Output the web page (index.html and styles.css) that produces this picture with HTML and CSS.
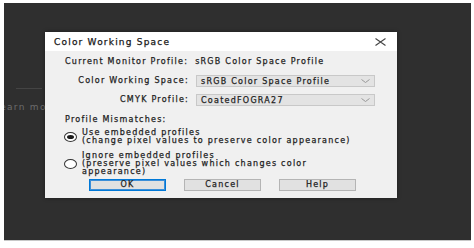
FILE: index.html
```html
<!DOCTYPE html>
<html lang="en">
<head>
    <meta charset="UTF-8">
    <title>Color Working Space</title>
    <link rel="stylesheet" href="styles.css">
</head>
<body>

<div class="screen">
    <div class="backdrop">
        <span class="rule"></span>
        <span class="learn">Learn more</span>
    </div>

    <div class="dialog">
        <div class="title-bar">
            <span>Color Working Space</span>
            <svg class="close" width="11" height="8" viewBox="0 0 11 8">
                <path d="M0.5 0.5 L10.5 7.5 M10.5 0.5 L0.5 7.5" stroke="#444" stroke-width="1.1" fill="none"/>
            </svg>
        </div>

        <div class="content">
            <div class="monitor-row">
                <span>Current Monitor Profile:</span>
                <span class="monitor-value">sRGB Color Space Profile</span>
            </div>

            <div class="field-grid">
                <label>Color Working Space:</label>
                <div class="select">
                    <span>sRGB Color Space Profile</span>
                    <svg width="9" height="4" viewBox="0 0 9 4"><path d="M0.5 0.5 L4.5 3.5 L8.5 0.5" stroke="#999" fill="none"/></svg>
                </div>
                <label>CMYK Profile:</label>
                <div class="select">
                    <span>CoatedFOGRA27</span>
                    <svg width="9" height="4" viewBox="0 0 9 4"><path d="M0.5 0.5 L4.5 3.5 L8.5 0.5" stroke="#999" fill="none"/></svg>
                </div>
            </div>

            <p class="section-label">Profile Mismatches:</p>

            <div class="radio-option">
                <span class="radio checked"></span>
                <span class="radio-text">Use embedded profiles<br>(change pixel values to preserve color appearance)</span>
            </div>
            <div class="radio-option">
                <span class="radio"></span>
                <span class="radio-text">Ignore embedded profiles<br>(preserve pixel values which changes color<br>appearance)</span>
            </div>

            <div class="buttons">
                <button class="btn default">OK</button>
                <button class="btn">Cancel</button>
                <button class="btn">Help</button>
            </div>
        </div>
    </div>
</div>

</body>
</html>
```

FILE: styles.css
```css
body {
    font-family: "DejaVu Sans", Verdana, sans-serif;
    margin: 0;
    padding: 0;
    background: white;
}
.screen {
    position: relative;
    margin: 3px 3px 0 4px;
    height: 238px;
    background: #2f2f2f;
    border-bottom: 1px solid #c8c8c8;
    padding: 29px 0 0 41px;
    box-sizing: border-box;
    overflow: hidden;
}
.backdrop {
    position: absolute;
    left: 0;
    top: 85px;
}
.backdrop .rule {
    display: block;
    margin-left: 12px;
    width: 26px;
    border-top: 1px solid #444;
}
.backdrop .learn {
    display: block;
    margin: 13px 0 0 -10px;
    font-size: 9px;
    letter-spacing: 1.3px;
    color: #6c6c6c;
    white-space: nowrap;
}
.dialog {
    position: relative;
    width: 352px;
    height: 166px;
    background: #f0f0f0;
    box-shadow: 0 0 4px rgba(0,0,0,0.4);
    font-size: 8px;
    letter-spacing: 1.25px;
    color: #1e1e1e;
    -webkit-text-stroke: 0.25px #1e1e1e;
}
.title-bar {
    height: 19px;
    background: white;
    display: flex;
    justify-content: space-between;
    align-items: center;
    padding: 0 11px 0 9px;
    font-size: 9px;
    letter-spacing: 1.2px;
    color: #111;
}
.content {
    padding: 7px 0 0 20px;
}
.monitor-row {
    display: flex;
    height: 8px;
    line-height: 8px;
}
.monitor-value {
    margin-left: 7px;
}
.field-grid {
    display: grid;
    grid-template-columns: 124px 179px;
    column-gap: 7px;
    row-gap: 7px;
    margin-top: 9px;
}
.field-grid label {
    text-align: right;
    line-height: 12px;
}
.select {
    height: 12px;
    background: #e3e3e3;
    border: 1px solid #c8c8c8;
    box-sizing: border-box;
    display: flex;
    justify-content: space-between;
    align-items: center;
    padding: 0 4px 0 4px;
}
.section-label {
    margin: 10px 0 0 0;
    line-height: 8px;
}
.radio-option {
    display: flex;
    align-items: center;
    margin-top: 5px;
}
.radio-option + .radio-option {
    margin-top: 7px;
}
.radio {
    flex: none;
    width: 13px;
    height: 10px;
    border: 1px solid #333;
    border-radius: 50%;
    box-sizing: border-box;
    background: white;
    margin: 0 5px 0 -1px;
    position: relative;
}
.radio.checked::after {
    content: "";
    position: absolute;
    left: 2px;
    top: 2px;
    width: 7px;
    height: 4px;
    border-radius: 50%;
    background: #1a1a1a;
}
.radio-text {
    line-height: 8px;
}
.buttons {
    display: flex;
    gap: 18px;
    margin: 3px 0 0 24px;
}
.btn {
    width: 77px;
    height: 12px;
    padding: 0;
    font-family: inherit;
    font-size: 8px;
    letter-spacing: 1.25px;
    color: #1e1e1e;
    -webkit-text-stroke: 0.25px #1e1e1e;
    background: #e1e1e1;
    border: 1px solid #b4b4b4;
    line-height: 10px;
}
.btn.default {
    border: 1px solid #0078d7;
    box-shadow: inset 0 0 0 1px #3d8fd8;
}
```
